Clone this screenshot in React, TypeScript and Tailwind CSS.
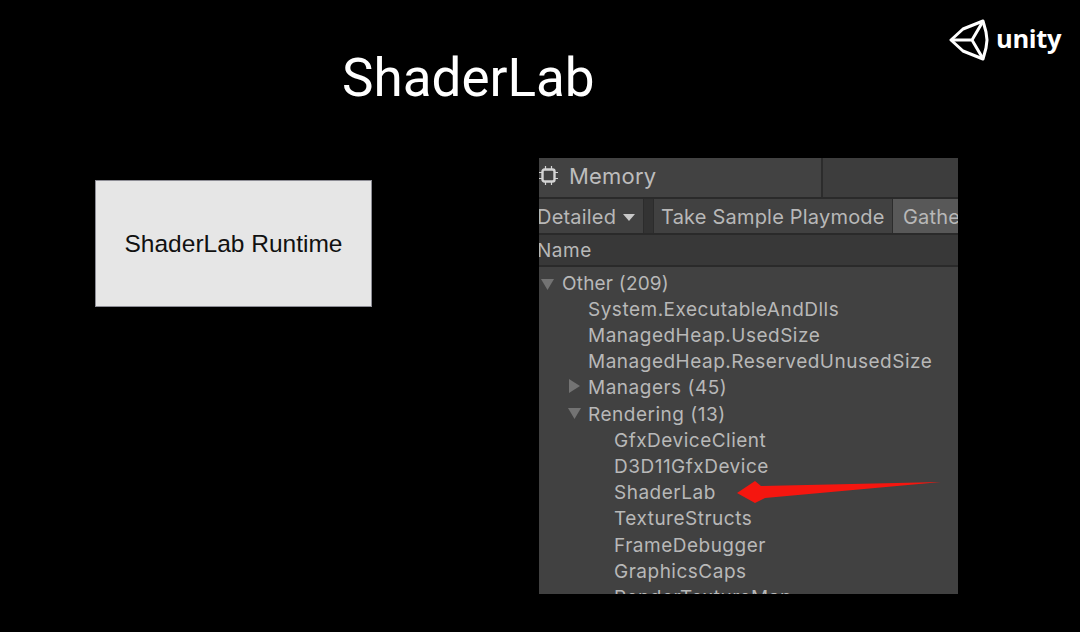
const rows = [
  { label: "System.ExecutableAndDlls", indent: "pl-[49px]" },
  { label: "ManagedHeap.UsedSize", indent: "pl-[49px]" },
  { label: "ManagedHeap.ReservedUnusedSize", indent: "pl-[49px]" },
  { label: "Managers (45)", indent: "pl-[49px]", caret: "right" },
  { label: "Rendering (13)", indent: "pl-[49px]", caret: "down" },
  { label: "GfxDeviceClient", indent: "pl-[75px]" },
  { label: "D3D11GfxDevice", indent: "pl-[75px]" },
  { label: "ShaderLab", indent: "pl-[75px]" },
  { label: "TextureStructs", indent: "pl-[75px]" },
  { label: "FrameDebugger", indent: "pl-[75px]" },
  { label: "GraphicsCaps", indent: "pl-[75px]" },
  { label: "RenderTextureMap", indent: "pl-[75px]" },
];

function UnityLogo() {
  return (
    <div className="flex items-center gap-[7px] text-white">
      <svg width="40" height="42" viewBox="0 0 40 42" fill="none" stroke="#fff" strokeWidth="3" strokeLinejoin="round">
        <path d="M2 21 L14 10 L34 2 L37 13 L38 21 L37 29 L34 40 L14 32 Z" />
        <path d="M2 21 H23 L33 4 M23 21 L33 38" />
      </svg>
      <span className="text-[25.5px] font-bold leading-none tracking-[-0.4px] font-['Open_Sans',sans-serif] mb-[3px]">unity</span>
    </div>
  );
}

function Caret({ dir }: { dir: string }) {
  return (
    <svg width="14" height="14" viewBox="0 0 14 14" className="shrink-0">
      {dir === "down" ? <path d="M0 2 H13 L6.5 13 Z" fill="#737373" /> : <path d="M1 0 L12 7 L1 14 Z" fill="#737373" />}
    </svg>
  );
}

function MemoryPanel() {
  return (
    <div className="relative w-[419px] h-[436px] overflow-hidden bg-[#414141] text-[#b8b8b8] font-['Inter',sans-serif] text-[19px] tracking-[0.5px] leading-[26px] whitespace-nowrap">
      {/* Tab bar */}
      <div className="flex h-[41px] bg-[#3d3d3d] border-b-[2px] border-[#2a2a2a]">
        <div className="flex items-center gap-[11px] w-[284px] pb-[4px] border-r-[2px] border-[#2c2c2c] bg-[#424242]">
          <svg width="19" height="19" viewBox="0 0 19 19" fill="none" stroke="#d4d4d4" strokeWidth="2.4">
            <rect x="3.5" y="3.5" width="12" height="12" rx="2" />
            <path d="M0 6.5h3M0 12.5h3M16 6.5h3M16 12.5h3M6.5 0v3M12.5 0v3M6.5 16v3M12.5 16v3" strokeWidth="1.2" />
          </svg>
          <span className="text-[22px] tracking-[0.2px] text-[#bdbdbd]">Memory</span>
        </div>
      </div>

      {/* Toolbar */}
      <div className="flex h-[36px] bg-[#333333] border-b-[2px] border-[#2a2a2a] text-[20px] tracking-[0.2px]">
        <div className="flex shrink-0 items-center w-[107px] pt-[2px] pr-[8px] justify-between -ml-[2px] border-r border-[#2c2c2c] bg-[#414141]">
          <span>Detailed</span>
          <span className="w-0 h-0 border-x-[6px] border-x-transparent border-t-[7px] border-t-[#c8c8c8]" />
        </div>
        <div className="w-[9px] shrink-0" />
        <div className="flex shrink-0 items-center pt-[2px] pl-[7px] w-[240px] border-x border-[#2c2c2c] bg-[#414141]">Take Sample Playmode</div>
        <div className="flex shrink-0 items-center pt-[2px] pl-[10px] w-[80px] bg-[#585858]">Gather</div>
      </div>

      {/* Column header */}
      <div className="flex items-center h-[32px] pt-[1px] bg-[#383838] border-b-[2px] border-[#2a2a2a]">
        <span className="-ml-[2px]">Name</span>
      </div>

      {/* Tree */}
      <div className="flex items-center h-[26.2px] mt-[3.6px] pl-[2px] gap-[7px]">
        <Caret dir="down" />
        <span className="tracking-[0.2px]">Other (209)</span>
      </div>
      {rows.map((row) => (
        <div key={row.label} className={`relative flex items-center h-[26.2px] ${row.indent}`}>
          {row.caret && (
            <span className="absolute left-[29px] top-[4px]">
              <Caret dir={row.caret} />
            </span>
          )}
          {row.label}
        </div>
      ))}

      {/* Red annotation arrow */}
      <svg className="absolute left-0 top-0" width="419" height="436" viewBox="0 0 419 436">
        <path d="M198 335 L216 323 L222 328 L402 324 L226 340 L216 345 Z" fill="#f5160f" />
      </svg>
    </div>
  );
}

export default function App() {
  return (
    <div className="relative w-[1080px] h-[632px] overflow-hidden bg-black font-['Roboto',sans-serif]">
      <div className="absolute right-[19px] top-[19px]">
        <UnityLogo />
      </div>

      <h1 className="pt-[45px] pl-[342px] text-[53px] leading-[66px] text-white">ShaderLab</h1>

      <div className="flex items-start pl-[95px] pt-[47px]">
        <div className="mt-[22px] flex items-center justify-center w-[277px] h-[127px] pt-[2px] bg-[#e6e6e6] border border-[#8d8d95] text-[24.5px] text-[#111] font-['Liberation_Sans',sans-serif]">
          ShaderLab Runtime
        </div>
        <div className="ml-[167px]">
          <MemoryPanel />
        </div>
      </div>
    </div>
  );
}
